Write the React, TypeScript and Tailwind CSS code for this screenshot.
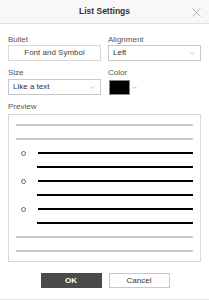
import { ChevronDown } from "lucide-react";

const font = { fontFamily: '"Liberation Sans", Arial, sans-serif' };

function Chevron() {
  return <ChevronDown size={7} strokeWidth={1.5} className="text-[#777]" />;
}

function Label({ children }: { children: string }) {
  return <div className="h-[10px] text-[8px] leading-[10px] text-[#555]">{children}</div>;
}

function Select({ value }: { value: string }) {
  return (
    <div className="flex h-[16px] items-center justify-between border border-[#c8c8c8] bg-white pl-[4px] pr-[4px] text-[8px] text-[#333]">
      <span>{value}</span>
      <Chevron />
    </div>
  );
}

function Line({ dark }: { dark?: boolean }) {
  return <div className={dark ? "h-[2px] shrink-0 bg-black" : "h-[2px] shrink-0 bg-[#cccccc]"} />;
}

function BulletRow() {
  return (
    <>
      <div className="flex h-[2px] shrink-0 items-center">
        <div className="ml-[5px] mr-[12px] h-[5px] w-[5px] shrink-0 rounded-full border border-[#666]" />
        <div className="h-[2px] flex-1 bg-black" />
      </div>
      <div className="ml-[21px] h-[2px] shrink-0 bg-black" />
    </>
  );
}

export default function App() {
  return (
    <div style={font} className="flex h-[300px] w-[209px] flex-col border-b border-[#e2e2e2] bg-white">
      <div className="relative flex h-[24px] shrink-0 items-center justify-center border-b border-[#e0e0e0] bg-[#f8f8f8]">
        <span className="text-[8.5px] font-bold text-[#333]">List Settings</span>
        <svg
          className="absolute right-[8px] top-[8px]"
          width="9"
          height="9"
          viewBox="0 0 9 9"
          stroke="#a8a8a8"
          strokeWidth="0.9"
        >
          <path d="M0.5 0.5 L8.5 8.5 M8.5 0.5 L0.5 8.5" />
        </svg>
      </div>

      <div className="px-[8px]">
        <div className="mt-[11px] grid grid-cols-2 gap-x-[7px]">
          <div>
            <Label>Bullet</Label>
            <div className="flex h-[16px] items-center justify-center border border-[#d8d8d8] bg-white text-[8px] text-[#444]">
              Font and Symbol
            </div>
          </div>
          <div>
            <Label>Alignment</Label>
            <Select value="Left" />
          </div>
        </div>

        <div className="mt-[7px] grid grid-cols-2 gap-x-[7px]">
          <div>
            <div className="mb-[1px]">
              <Label>Size</Label>
            </div>
            <Select value="Like a text" />
          </div>
          <div>
            <div className="mb-[1px]">
              <Label>Color</Label>
            </div>
            <div className="flex h-[16px] w-[31px] items-center gap-[1px] pl-[1px]">
              <div className="h-[15px] w-[21px] border border-[#888] bg-black" />
              <Chevron />
            </div>
          </div>
        </div>

        <div className="mt-[7px]">
          <Label>Preview</Label>
        </div>
        <div className="mt-[2px] flex h-[148px] flex-col gap-[12px] border border-[#d8d8d8] px-[7px] py-[9px]">
          <Line />
          <Line />
          <BulletRow />
          <BulletRow />
          <BulletRow />
          <Line />
          <Line />
        </div>

        <div className="mt-[11px] flex justify-center gap-[7px] pl-[1px]">
          <button className="h-[15px] w-[61px] bg-[#4a4a4a] text-[8px] font-bold text-white">OK</button>
          <button className="h-[15px] w-[61px] border border-[#c8c8c8] bg-white text-[8px] text-[#333]">
            Cancel
          </button>
        </div>
      </div>
    </div>
  );
}
